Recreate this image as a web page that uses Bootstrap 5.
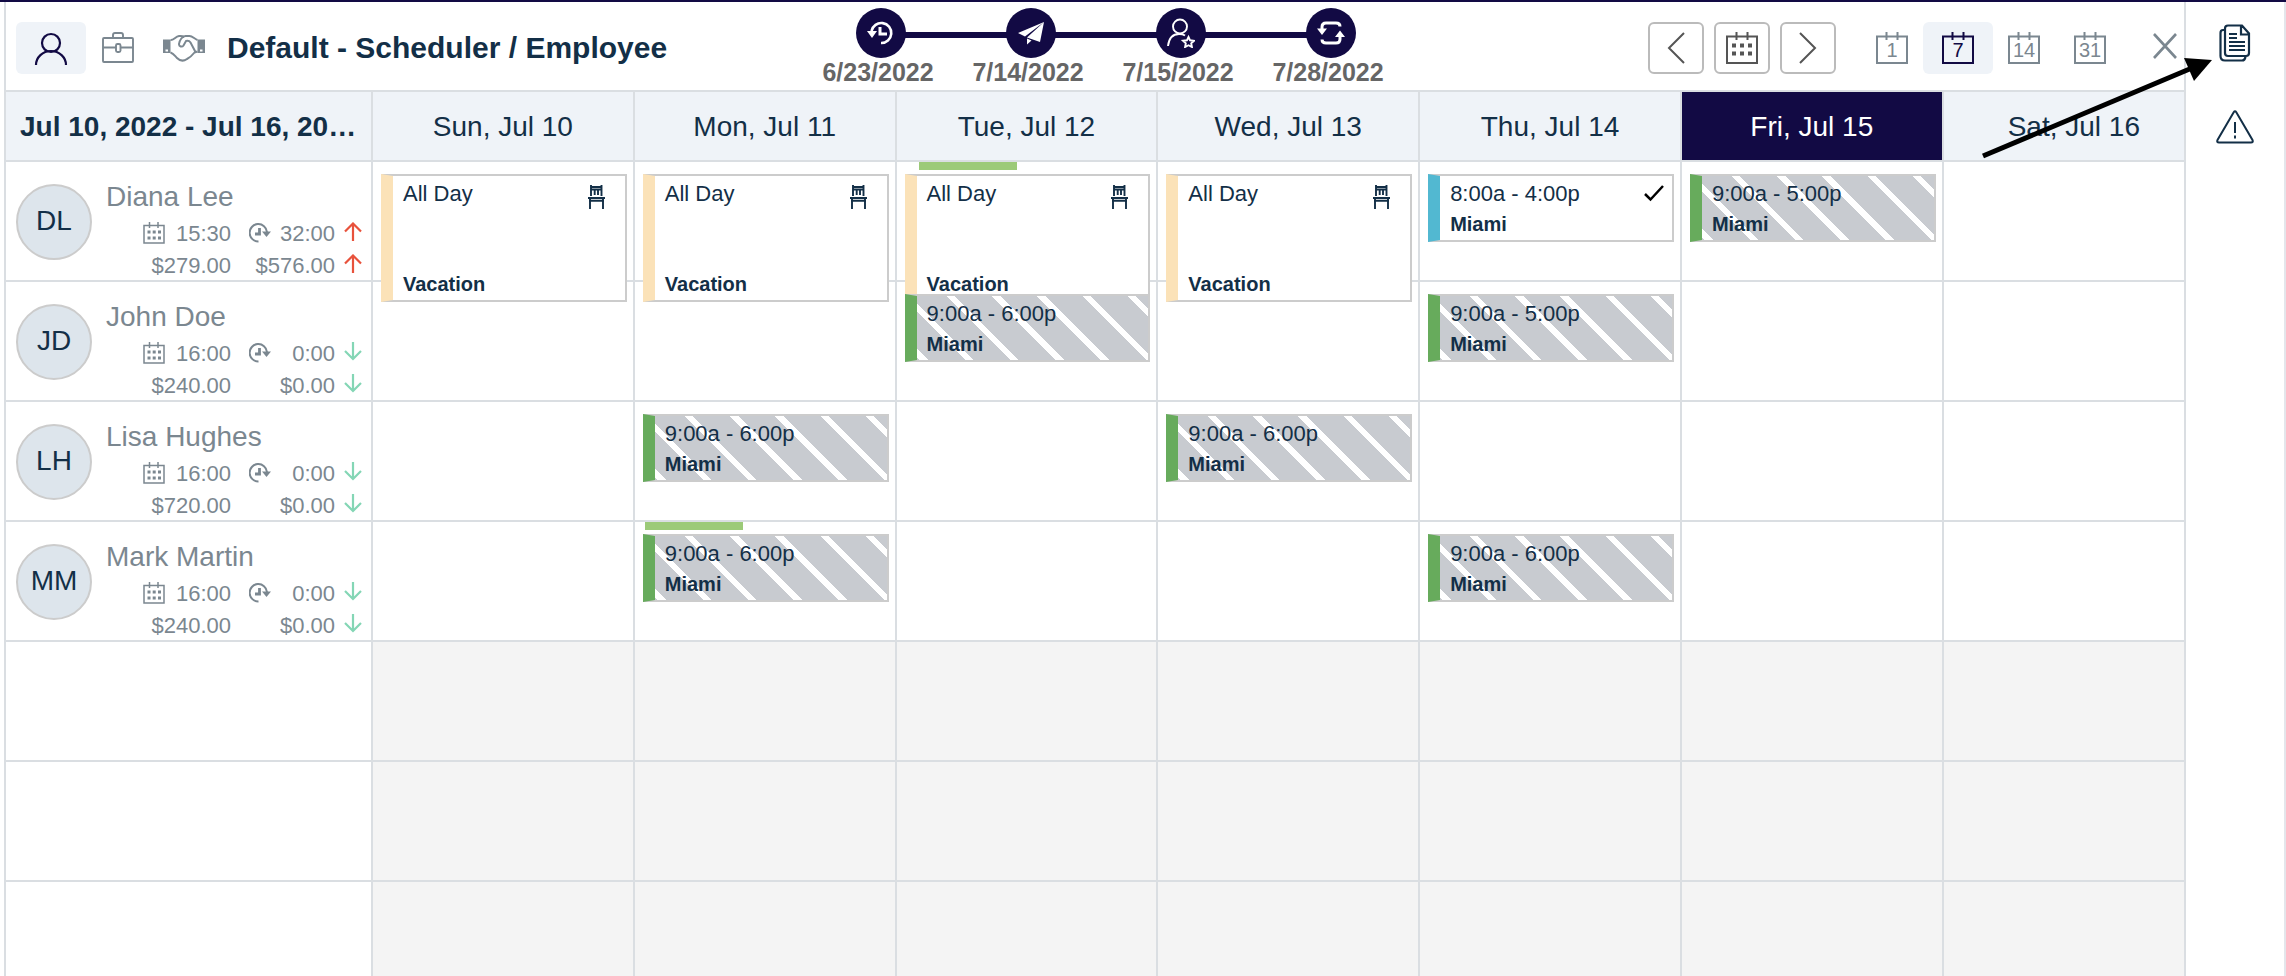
<!DOCTYPE html>
<html lang="en">
<head>
<meta charset="utf-8">
<meta name="viewport" content="width=device-width, initial-scale=1">
<title>Default - Scheduler / Employee</title>
<link rel="stylesheet" href="https://cdn.jsdelivr.net/npm/bootstrap@5.3.0/dist/css/bootstrap.min.css">
<style>
:root { --ink:#132f47; --navy:#120a44; --muted:#7b8790; --line:#dadee2; --pale:#eff3f8; }
body { font-family:"Liberation Sans", Arial, sans-serif; font-size:22px; color:var(--ink); background:#fff; }
svg { display:block; flex:none; }
.app { border-top:2px solid var(--navy); overflow:hidden; }
.board { margin-left:4px; border-left:2px solid var(--line); min-width:0; }
.rail { width:102px; border-left:2px solid var(--line); border-right:2px solid #e4e6eb; padding-top:17px; }
.rail .btn { height:48px; margin-bottom:36px; padding:0; border:0; color:var(--ink); display:grid; place-items:center; width:100%; }

/* toolbar */
.toolbar { display:grid; grid-template-columns:1fr auto 1fr; height:90px; border-bottom:2px solid var(--line); }
.toolbar-side { display:flex; align-items:center; padding:4px 0 0 10px; }
.tool { height:52px; padding:0; border:0; border-radius:6px; color:var(--muted); display:grid; place-items:center; }
.tool.active { background:var(--pale) !important; color:var(--navy) !important; }
.tool-mode { width:70px; }
.tool-view { width:70px; margin:0 -2px; }
.tool-nav { width:56px; border:2px solid #bbb; color:#555; }
.tool-plain { width:32px; margin:0 10px 0 16px; }
.tool-wide { width:42px; margin:0 10px 0 19px; }
.board-title { font-size:30px; font-weight:700; line-height:36px; margin:0 0 0 12px; white-space:nowrap; color:var(--ink); }
.close-x { width:24px; height:52px; padding:0 0 4px; border:0; color:var(--muted); margin:0 7px 0 30px; }

/* schedule timeline */
.timeline { margin:0; padding:6px 0 0 22px; list-style:none; display:flex; }
.timeline li { width:150px; position:relative; text-align:center; }
.timeline li + li::before { content:""; position:absolute; top:24px; left:-75px; width:150px; height:6px; background:var(--navy); }
.dot { position:relative; z-index:1; width:50px; height:50px; border-radius:50%; background:var(--navy); color:#fff; display:grid; place-items:center; margin:0 auto; }
.stamp { font-size:25px; line-height:28px; font-weight:700; color:#666; padding-right:6px; }

/* calendar */
.sched { table-layout:fixed; width:100%; border-collapse:separate; border-spacing:0; }
.col-name { width:367px; }
.col-day { width:12.02%; }
.sched th, .sched td { padding:0; border:0 solid var(--line); border-width:0 2px 2px 0; vertical-align:top; }
.sched th:last-child, .sched td:last-child { border-right-width:0; }
.sched thead th { height:70px; padding-top:2px; font-size:28px; font-weight:400; line-height:32px; text-align:center; vertical-align:middle; background:var(--pale); }
.sched thead th:first-child { font-weight:700; text-align:left; padding:2px 12px 0 14px; }
.sched thead th:last-child { padding-left:20px; }
.sched thead th.today { background:var(--navy); color:#fff; }
.sched tbody th, .sched tbody td { height:120px; font-weight:400; }
.sched tr.blank td { background:#f4f4f4; }
.slot { height:118px; padding:12px 6px 0 8px; position:relative; }
.avail { position:absolute; top:0; height:8px; background:#9cca78; }
.shift { position:relative; height:68px; border:2px solid #ccc; border-left:12px solid #67ab5c; padding:3px 8px 1px 10px; line-height:30px; background:#fff; display:flex; flex-direction:column; justify-content:space-between; }
.shift b { font-size:20px; }
.shift svg { margin-top:6px; }
.shift.allday { height:128px; border-left-color:#fbe2b8; }
.shift.allday svg { margin-right:12px; }
.shift.confirmed { border-left-color:#52b8d1; }
.shift.striped { background:repeating-linear-gradient(45deg,#c8cbd0 0 2px,#fff 2px 8px,#c8cbd0 8px 32px) padding-box; }

/* employee cell */
.person { height:118px; color:var(--muted); padding:18px 9px 0 10px; }
.avatar { width:76px; height:76px; border:2px solid #ccc; border-radius:50%; background:#dde5ec; color:var(--ink); font-size:28px; line-height:70px; text-align:center; margin-top:4px; flex:none; }
.pname { font-size:28px; line-height:34px; margin-left:14px; }
.stats { display:grid; grid-template-columns:22px 66px 40px 64px 27px; justify-content:end; justify-items:end; align-items:center; grid-auto-rows:32px; margin-top:3px; }
.stats .wide { grid-column:span 2; }
.up { color:#e8523c; } .down { color:#84d6b5; }

.pointer { position:absolute; top:52px; right:70px; pointer-events:none; z-index:5; }
.num { font-family:"Liberation Sans Narrow","Liberation Sans",sans-serif; font-size:20px; }
</style>
</head>
<body>
<svg width="0" height="0" class="position-absolute" aria-hidden="true">
  <symbol id="cal" viewBox="0 0 22 22"><path d="M1 3.500H21V21H1ZM6.500 0V6M15 0V6" fill="none" stroke="currentColor" stroke-width="1.500"/><path d="M4.500 8.500h3v3h-3zM9.700 8.500h3v3h-3zM15 8.500h3v3h-3zM4.500 14.500h3v3h-3zM9.700 14.500h3v3h-3zM15 14.500h3v3h-3z" fill="currentColor"/></symbol>
  <symbol id="ot" viewBox="0 0 22 22"><path d="M9.500 19.500A8.700 8.700 0 1 1 18 10" fill="none" stroke="currentColor" stroke-width="2"/><path d="M13 9.500h9l-4.500 5.500z" fill="currentColor"/><path d="M10.500 6V12H6" fill="none" stroke="currentColor" stroke-width="2.800"/></symbol>
  <symbol id="arrow-up" viewBox="0 0 18 22"><path d="M9 19V2M1 9.500 9 1.500 17 9.500" fill="none" stroke="currentColor" stroke-width="2.200"/></symbol>
  <symbol id="arrow-down" viewBox="0 0 18 22"><path d="M9 0V17M1 9 9 17 17 9" fill="none" stroke="currentColor" stroke-width="2.200"/></symbol>
  <symbol id="chair" viewBox="0 0 17 24"><path d="M3 0V11M13.500 0V11M3 2H13.500M3 4.500H13.500M6.700 4V10M10 4V10M0 13H17M1 15.700H16M2 13V24M15 13V24" fill="none" stroke="currentColor" stroke-width="1.900"/></symbol>
  <symbol id="page" viewBox="0 0 32 32"><path d="M1 4.500H31V31H1ZM10.500 0V8M21.500 0V8" fill="none" stroke="currentColor" stroke-width="2"/></symbol>
</svg>

<div class="app d-flex vh-100 position-relative">
  <main class="board flex-grow-1">
    <header class="toolbar">
      <div class="toolbar-side">
        <button class="btn tool tool-mode active" type="button" aria-label="Employees"><svg width="34" height="36" viewBox="0 0 34 36" fill="none" stroke="currentColor" stroke-width="2.200"><circle cx="17" cy="13" r="9"/><path d="M2 35a15 14 0 0 1 30 0"/></svg></button>
        <button class="btn tool tool-plain" type="button" aria-label="Jobs"><svg width="32" height="32" viewBox="0 0 32 32" fill="none" stroke="currentColor" stroke-width="1.900"><rect x="1" y="6" width="30" height="24" rx="1"/><path d="M11 6V3q0-2 2-2h6q2 0 2 2v3M1 15.500h13M18.500 15.500H31"/><rect x="14" y="12" width="4.500" height="8" rx="1.500"/></svg></button>
        <button class="btn tool tool-wide" type="button" aria-label="Clients"><svg width="42" height="28" viewBox="0 0 42 28" fill="none" stroke="currentColor" stroke-width="2"><path d="M0 5.500h7.500v13.500H0zM34.500 5.500H42v13.500h-7.500z" fill="currentColor" stroke="none"/><path d="M2.500 15.500h2.500v2H2.500zM37 15.500h2.500v2H37z" fill="#fff" stroke="none"/><path d="M7.500 6c3 .5 5-3.500 8.500-4 2-.3 4 .2 5.500 1M34.500 6c-3-1-5-4-8-4h-4c-3 0-6 4-6.500 8-.2 2.500 3 3.500 4.500 1.500l2.500-4.500c2-.5 3.500 0 4.500 1.500L32.500 18M7.500 18.500c3 1 4.500 3.500 6.500 5.500 3 3 6.500 3.500 10 1 3-1.500 5.500-4 7.500-6.500l3-1"/></svg></button>
        <h1 class="board-title">Default - Scheduler / Employee</h1>
      </div>

      <ol class="timeline">
        <li><div class="dot"><svg width="28" height="28" viewBox="0 0 28 28"><path d="M4.500 12A10 10 0 1 1 14 24" fill="none" stroke="#fff" stroke-width="2.600"/><path d="M0 12h10l-5 7z" fill="#fff"/><path d="M13 8v7h7" fill="none" stroke="#fff" stroke-width="3"/></svg></div><div class="stamp">6/23/2022</div></li>
        <li><div class="dot"><svg width="28" height="28" viewBox="0 0 28 28" fill="#fff"><path d="M27 3 1 14l7 3.500zM27 3 10 18.500l13 4.500zM10 19.500v6l4.500-4z"/></svg></div><div class="stamp">7/14/2022</div></li>
        <li><div class="dot"><svg width="28" height="30" viewBox="0 0 28 30" fill="none" stroke="#fff" stroke-width="1.900"><circle cx="13" cy="8.500" r="7"/><path d="M1 28C2 20 5 16 12 16q4 0 6 1.500M21.500 19l1.600 3.300 3.900.5-2.800 2.500.7 3.700-3.400-1.800-3.400 1.800.7-3.700-2.800-2.500 3.900-.5z"/></svg></div><div class="stamp">7/15/2022</div></li>
        <li><div class="dot"><svg width="28" height="28" viewBox="0 0 28 28"><path d="M5 10V8q0-4 4-4h10q4 0 4 3.500M23 17v3q0 4-4 4H9Q5 24 5 20.500" fill="none" stroke="#fff" stroke-width="3"/><path d="M0 9.500h10l-5 6.500zM18 18h10l-5-6.500z" fill="#fff"/></svg></div><div class="stamp">7/28/2022</div></li>
      </ol>

      <div class="toolbar-side justify-content-end">
        <div class="d-flex" style="gap:10px;margin-right:23px">
          <button class="btn tool tool-nav" type="button" aria-label="Previous week"><svg width="18" height="32" viewBox="0 0 18 32" fill="none" stroke="currentColor" stroke-width="2"><path d="M17 1 2 16l15 15"/></svg></button>
          <button class="btn tool tool-nav" type="button" aria-label="Pick a date"><svg width="32" height="32" viewBox="0 0 32 32"><use href="#page"/><path d="M6 11.500h4v4H6zM14 11.500h4v4h-4zM22 11.500h4v4h-4zM6 19.500h4v4H6zM14 19.500h4v4h-4zM22 19.500h4v4h-4z" fill="currentColor"/></svg></button>
          <button class="btn tool tool-nav" type="button" aria-label="Next week"><svg width="18" height="32" viewBox="0 0 18 32" fill="none" stroke="currentColor" stroke-width="2"><path d="M1 1 16 16 1 31"/></svg></button>
        </div>
        <button class="btn tool tool-view" type="button" aria-label="Day"><svg width="32" height="32" viewBox="0 0 32 32"><use href="#page"/><text class="num" x="16" y="25" text-anchor="middle" fill="currentColor">1</text></svg></button>
        <button class="btn tool tool-view active" type="button" aria-label="Week"><svg width="32" height="32" viewBox="0 0 32 32"><use href="#page"/><text class="num" x="16" y="25" text-anchor="middle" fill="currentColor">7</text></svg></button>
        <button class="btn tool tool-view" type="button" aria-label="Two weeks"><svg width="32" height="32" viewBox="0 0 32 32"><use href="#page"/><text class="num" x="16" y="25" text-anchor="middle" fill="currentColor">14</text></svg></button>
        <button class="btn tool tool-view" type="button" aria-label="Month"><svg width="32" height="32" viewBox="0 0 32 32"><use href="#page"/><text class="num" x="16" y="25" text-anchor="middle" fill="currentColor">31</text></svg></button>
        <button class="btn close-x" type="button" aria-label="Close"><svg width="24" height="26" viewBox="0 0 24 26" fill="none" stroke="currentColor" stroke-width="2.600"><path d="M1 1 23 25M23 1 1 25"/></svg></button>
      </div>
    </header>

    <table class="sched">
      <colgroup><col class="col-name"><col class="col-day"><col class="col-day"><col class="col-day"><col class="col-day"><col class="col-day"><col class="col-day"><col></colgroup>
      <thead>
        <tr><th scope="col"><div class="text-truncate">Jul 10, 2022 - Jul 16, 2022</div></th><th scope="col">Sun, Jul 10</th><th scope="col">Mon, Jul 11</th><th scope="col">Tue, Jul 12</th><th scope="col">Wed, Jul 13</th><th scope="col">Thu, Jul 14</th><th scope="col" class="today">Fri, Jul 15</th><th scope="col">Sat, Jul 16</th></tr>
      </thead>
      <tbody>
        <tr>
          <th scope="row"><div class="person d-flex"><div class="avatar">DL</div><div class="flex-grow-1"><div class="pname">Diana Lee</div>
            <div class="stats"><svg width="22" height="22"><use href="#cal"/></svg><span>15:30</span><svg width="22" height="22"><use href="#ot"/></svg><span>32:00</span><svg class="up" width="18" height="22"><use href="#arrow-up"/></svg><span class="wide">$279.00</span><span class="wide">$576.00</span><svg class="up" width="18" height="22"><use href="#arrow-up"/></svg></div></div></div></th>
          <td><div class="slot"><div class="shift allday"><div class="d-flex justify-content-between"><span>All Day</span><svg width="17" height="24"><use href="#chair"/></svg></div><b>Vacation</b></div></div></td>
          <td><div class="slot"><div class="shift allday"><div class="d-flex justify-content-between"><span>All Day</span><svg width="17" height="24"><use href="#chair"/></svg></div><b>Vacation</b></div></div></td>
          <td><div class="slot"><div class="avail" style="left:8.500%;width:37.800%"></div><div class="shift allday"><div class="d-flex justify-content-between"><span>All Day</span><svg width="17" height="24"><use href="#chair"/></svg></div><b>Vacation</b></div></div></td>
          <td><div class="slot"><div class="shift allday"><div class="d-flex justify-content-between"><span>All Day</span><svg width="17" height="24"><use href="#chair"/></svg></div><b>Vacation</b></div></div></td>
          <td><div class="slot"><div class="shift confirmed"><div class="d-flex justify-content-between"><span>8:00a - 4:00p</span><svg width="20" height="18" viewBox="0 0 20 18" fill="none" stroke="#000" stroke-width="2.500"><path d="M1 9l5.500 5.500L19 1"/></svg></div><b>Miami</b></div></div></td>
          <td><div class="slot"><div class="shift striped"><span>9:00a - 5:00p</span><b>Miami</b></div></div></td>
          <td></td>
        </tr>
        <tr>
          <th scope="row"><div class="person d-flex"><div class="avatar">JD</div><div class="flex-grow-1"><div class="pname">John Doe</div>
            <div class="stats"><svg width="22" height="22"><use href="#cal"/></svg><span>16:00</span><svg width="22" height="22"><use href="#ot"/></svg><span>0:00</span><svg class="down" width="18" height="22"><use href="#arrow-down"/></svg><span class="wide">$240.00</span><span class="wide">$0.00</span><svg class="down" width="18" height="22"><use href="#arrow-down"/></svg></div></div></div></th>
          <td></td><td></td>
          <td><div class="slot"><div class="shift striped"><span>9:00a - 6:00p</span><b>Miami</b></div></div></td>
          <td></td>
          <td><div class="slot"><div class="shift striped"><span>9:00a - 5:00p</span><b>Miami</b></div></div></td>
          <td></td><td></td>
        </tr>
        <tr>
          <th scope="row"><div class="person d-flex"><div class="avatar">LH</div><div class="flex-grow-1"><div class="pname">Lisa Hughes</div>
            <div class="stats"><svg width="22" height="22"><use href="#cal"/></svg><span>16:00</span><svg width="22" height="22"><use href="#ot"/></svg><span>0:00</span><svg class="down" width="18" height="22"><use href="#arrow-down"/></svg><span class="wide">$720.00</span><span class="wide">$0.00</span><svg class="down" width="18" height="22"><use href="#arrow-down"/></svg></div></div></div></th>
          <td></td>
          <td><div class="slot"><div class="shift striped"><span>9:00a - 6:00p</span><b>Miami</b></div></div></td>
          <td></td>
          <td><div class="slot"><div class="shift striped"><span>9:00a - 6:00p</span><b>Miami</b></div></div></td>
          <td></td><td></td><td></td>
        </tr>
        <tr>
          <th scope="row"><div class="person d-flex"><div class="avatar">MM</div><div class="flex-grow-1"><div class="pname">Mark Martin</div>
            <div class="stats"><svg width="22" height="22"><use href="#cal"/></svg><span>16:00</span><svg width="22" height="22"><use href="#ot"/></svg><span>0:00</span><svg class="down" width="18" height="22"><use href="#arrow-down"/></svg><span class="wide">$240.00</span><span class="wide">$0.00</span><svg class="down" width="18" height="22"><use href="#arrow-down"/></svg></div></div></div></th>
          <td></td>
          <td><div class="slot"><div class="avail" style="left:3.800%;width:37.800%"></div><div class="shift striped"><span>9:00a - 6:00p</span><b>Miami</b></div></div></td>
          <td></td><td></td>
          <td><div class="slot"><div class="shift striped"><span>9:00a - 6:00p</span><b>Miami</b></div></div></td>
          <td></td><td></td>
        </tr>
        <tr class="blank"><th></th><td></td><td></td><td></td><td></td><td></td><td></td><td></td></tr>
        <tr class="blank"><th></th><td></td><td></td><td></td><td></td><td></td><td></td><td></td></tr>
        <tr class="blank"><th></th><td></td><td></td><td></td><td></td><td></td><td></td><td></td></tr>
      </tbody>
    </table>
  </main>

  <aside class="rail flex-shrink-0">
    <button class="btn" type="button" aria-label="Documents"><svg width="32" height="38" viewBox="0 0 32 38" fill="none" stroke="currentColor" stroke-width="2.200"><path d="M9 1.500H23l7 8V29q0 3-3 3H9q-3 0-3-3V4.500q0-3 3-3zM22 2v8.500h8M6 6H4Q1.500 6 1.500 9V32q0 4.500 4.500 4.500H23q3 0 3.500-4M10 10h8M10 14h8M10 18h16M10 22h16M10 26h16"/></svg></button>
    <button class="btn" type="button" aria-label="Warnings"><svg width="38" height="34" viewBox="0 0 38 34" fill="none" stroke="currentColor" stroke-width="2"><path d="M17.700 2.200q1.300-2 2.600 0L36.500 30q1 2.500-1.500 2.500H3Q.5 32.500 1.500 30zM19 12v11M19 25.500v3"/></svg></button>
  </aside>

  <svg class="pointer" width="236" height="110" viewBox="0 0 236 110" aria-hidden="true"><path d="M3 102 212 14" stroke="#000" stroke-width="5"/><path d="M204 4 232 6 214 27z"/></svg>
</div>
<script src="https://cdn.jsdelivr.net/npm/bootstrap@5.3.0/dist/js/bootstrap.bundle.min.js"></script>
</body>
</html>
